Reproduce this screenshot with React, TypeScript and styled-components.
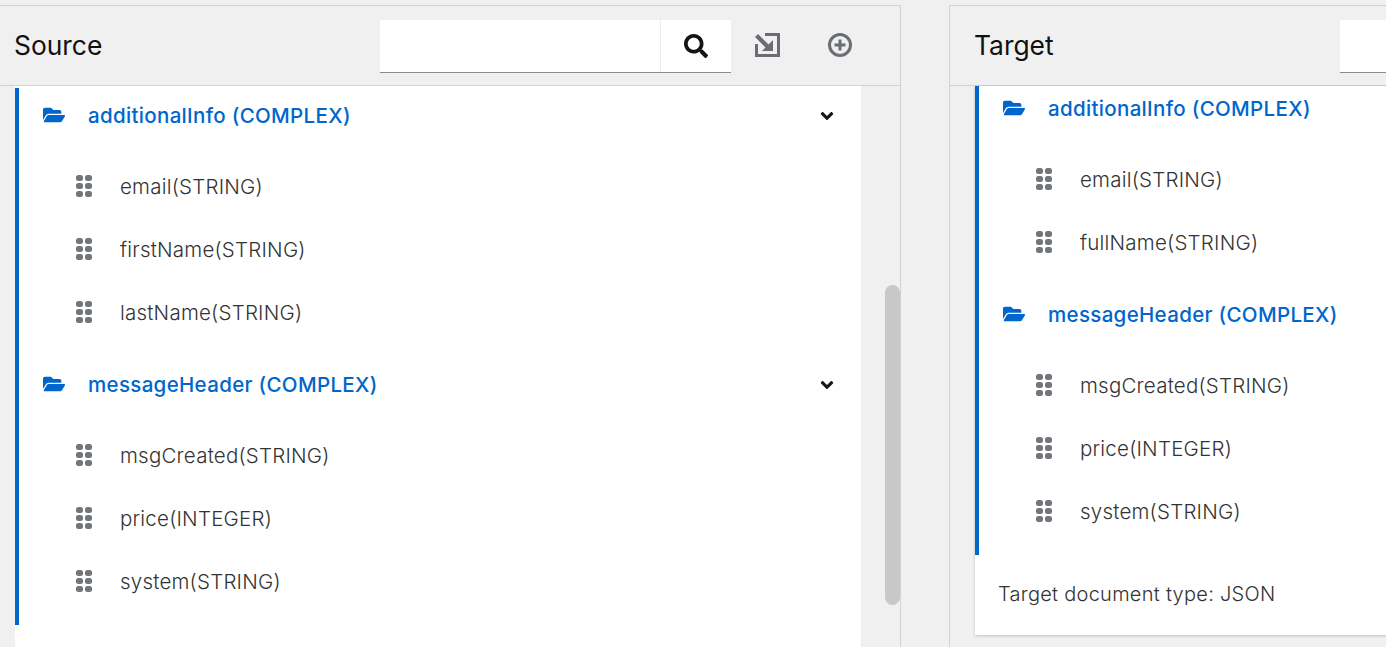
import { createGlobalStyle } from "styled-components";
import styled from "styled-components";
import { FaFolderOpen, FaSearch, FaAngleDown } from "react-icons/fa";

const GlobalStyle = createGlobalStyle`
  html, body {
    margin: 0;
    height: 100%;
    overflow: hidden;
    background: #f0f0f0;
    font-family: "Inter", "Liberation Sans", sans-serif;
  }
`;

const Page = styled.div`
  display: flex;
  gap: 48px;
  height: 647px;
  padding-top: 5px;
  box-sizing: border-box;
  overflow: hidden;
`;

const Panel = styled.section<{ $width: number; $left?: boolean }>`
  flex: 0 0 ${(props) => props.$width}px;
  display: flex;
  flex-direction: column;
  box-sizing: border-box;
  border-top: 1px solid #d2d2d2;
  border-right: ${(props) => (props.$left ? "none" : "1px solid #d2d2d2")};
  border-left: ${(props) => (props.$left ? "1px solid #d2d2d2" : "none")};
`;

const Header = styled.header`
  flex: 0 0 80px;
  display: flex;
  align-items: center;
  box-sizing: border-box;
  border-bottom: 1px solid #d2d2d2;
`;

const Title = styled.h2<{ $pad: number; $width: number }>`
  flex: 0 0 ${(props) => props.$width}px;
  box-sizing: border-box;
  margin: -2px 0 0;
  padding-left: ${(props) => props.$pad}px;
  font-size: 26.4px;
  font-weight: 400;
  color: #111;
`;

const SearchBox = styled.div<{ $width: number }>`
  flex: 0 0 ${(props) => props.$width}px;
  display: flex;
  height: 53px;
  box-sizing: border-box;
  margin-top: 2px;
  background: #fff;
  border-bottom: 1px solid #8a8d90;
`;

const SearchInput = styled.div`
  flex: 0 0 280px;
  border-right: 1px solid #ededed;
`;

const SearchButton = styled.div`
  flex: 1;
  display: flex;
  align-items: center;
  justify-content: center;
  color: #151515;
  font-size: 24px;
`;

const ToolIcon = styled.svg<{ $gap: number }>`
  flex: 0 0 auto;
  margin-left: ${(props) => props.$gap}px;
  margin-top: -2px;
  color: #6a6e73;
`;

const Body = styled.div<{ $pad: number }>`
  flex: 1;
  min-height: 0;
  display: flex;
  padding-left: ${(props) => props.$pad}px;
`;

const Card = styled.div<{ $width: number; $shadow?: boolean }>`
  flex: 0 0 ${(props) => props.$width}px;
  align-self: ${(props) => (props.$shadow ? "flex-start" : "stretch")};
  background: #fff;
  box-shadow: ${(props) =>
    props.$shadow ? "0 1px 3px rgba(3, 3, 3, 0.2)" : "none"};
`;

const Tree = styled.div<{ $top: number; $height: number; $offset: number }>`
  margin-top: ${(props) => props.$top}px;
  height: ${(props) => props.$height}px;
  padding-top: ${(props) => props.$offset}px;
  box-sizing: border-box;
  border-left: 4px solid #0066cc;
  overflow: hidden;
`;

const GroupRow = styled.div`
  display: flex;
  align-items: center;
  height: 30px;
  color: #0066cc;
  font-size: 20.5px;
  font-weight: 500;
  letter-spacing: 0.33px;
  padding-left: 24px;
`;

const GroupIcon = styled.span`
  flex: 0 0 45px;
  display: flex;
  align-items: center;
  margin-top: -2px;
  font-size: 22px;
`;

const GroupName = styled.span`
  flex: 1;
  margin-top: -2px;
  white-space: nowrap;
`;

const Chevron = styled.span`
  flex: 0 0 auto;
  display: flex;
  margin-right: 24px;
  color: #151515;
  font-size: 20px;
`;

const FieldList = styled.ul`
  list-style: none;
  margin: 0 0 26px;
  padding: 24px 0 0 57px;
`;

const FieldRow = styled.li`
  display: flex;
  align-items: center;
  height: 63px;
  color: #333;
  font-size: 20.5px;
  font-weight: 300;
  letter-spacing: 0.22px;
  white-space: nowrap;
`;

const Grip = styled.svg`
  flex: 0 0 16px;
  margin-right: 28px;
  margin-top: -2px;
  color: #72767b;
`;

const Footer = styled.div`
  padding: 27px 23px 0;
  height: 80px;
  box-sizing: border-box;
  color: #333;
  font-size: 20px;
  font-weight: 300;
  letter-spacing: 0.27px;
`;

const ScrollTrack = styled.div`
  flex: 0 0 15px;
  margin-left: 24px;
  padding-top: 199px;
`;

const ScrollThumb = styled.div`
  height: 320px;
  background: #c8c8c8;
  border-radius: 8px;
`;

type Group = { name: string; fields: string[] };

const sourceGroups: Group[] = [
  {
    name: "additionalInfo (COMPLEX)",
    fields: ["email(STRING)", "firstName(STRING)", "lastName(STRING)"],
  },
  {
    name: "messageHeader (COMPLEX)",
    fields: ["msgCreated(STRING)", "price(INTEGER)", "system(STRING)"],
  },
];

const targetGroups: Group[] = [
  {
    name: "additionalInfo (COMPLEX)",
    fields: ["email(STRING)", "fullName(STRING)"],
  },
  {
    name: "messageHeader (COMPLEX)",
    fields: ["msgCreated(STRING)", "price(INTEGER)", "system(STRING)"],
  },
];

const GripIcon = () => (
  <Grip width="16" height="22" viewBox="0 0 16 22" fill="currentColor">
    <rect x="0" y="0" width="7" height="6" rx="2.5" />
    <rect x="9" y="0" width="7" height="6" rx="2.5" />
    <rect x="0" y="8" width="7" height="6" rx="2.5" />
    <rect x="9" y="8" width="7" height="6" rx="2.5" />
    <rect x="0" y="16" width="7" height="6" rx="2.5" />
    <rect x="9" y="16" width="7" height="6" rx="2.5" />
  </Grip>
);

const ExportIcon = ({ gap }: { gap: number }) => (
  <ToolIcon $gap={gap} width="25" height="24" viewBox="0 0 25 24" fill="none">
    <path d="M10 1.5H23.5V22.5H1.5V11" stroke="currentColor" strokeWidth="3" />
    <path d="M1.5 2.5L15 16" stroke="currentColor" strokeWidth="4.4" />
    <path d="M18 7V18H7Z" fill="currentColor" />
  </ToolIcon>
);

const PlusIcon = ({ gap }: { gap: number }) => (
  <ToolIcon $gap={gap} width="24" height="24" viewBox="0 0 24 24" fill="none">
    <circle cx="12" cy="12" r="10.5" stroke="currentColor" strokeWidth="3" />
    <path d="M12 6.5V17.5M6.5 12H17.5" stroke="currentColor" strokeWidth="3" />
  </ToolIcon>
);

const GroupTree = ({ groups, chevron }: { groups: Group[]; chevron?: boolean }) => (
  <>
    {groups.map((group) => (
      <div key={group.name}>
        <GroupRow>
          <GroupIcon>
            <FaFolderOpen />
          </GroupIcon>
          <GroupName>{group.name}</GroupName>
          {chevron && (
            <Chevron>
              <FaAngleDown />
            </Chevron>
          )}
        </GroupRow>
        <FieldList>
          {group.fields.map((field) => (
            <FieldRow key={field}>
              <GripIcon />
              {field}
            </FieldRow>
          ))}
        </FieldList>
      </div>
    ))}
  </>
);

const App = () => {
  return (
    <Page>
      <GlobalStyle />
      <Panel $width={901}>
        <Header>
          <Title $pad={14} $width={380}>
            Source
          </Title>
          <SearchBox $width={351}>
            <SearchInput />
            <SearchButton>
              <FaSearch />
            </SearchButton>
          </SearchBox>
          <ExportIcon gap={24} />
          <PlusIcon gap={48} />
        </Header>
        <Body $pad={15}>
          <Card $width={846}>
            <Tree $top={2} $height={537} $offset={13}>
              <GroupTree groups={sourceGroups} chevron />
            </Tree>
          </Card>
          <ScrollTrack>
            <ScrollThumb />
          </ScrollTrack>
        </Body>
      </Panel>
      <Panel $width={500} $left>
        <Header>
          <Title $pad={24} $width={390}>
            Target
          </Title>
          <SearchBox $width={351}>
            <SearchInput />
          </SearchBox>
        </Header>
        <Body $pad={25}>
          <Card $width={500} $shadow>
            <Tree $top={0} $height={469} $offset={8}>
              <GroupTree groups={targetGroups} />
            </Tree>
            <Footer>Target document type: JSON</Footer>
          </Card>
        </Body>
      </Panel>
    </Page>
  );
};

export default App;
